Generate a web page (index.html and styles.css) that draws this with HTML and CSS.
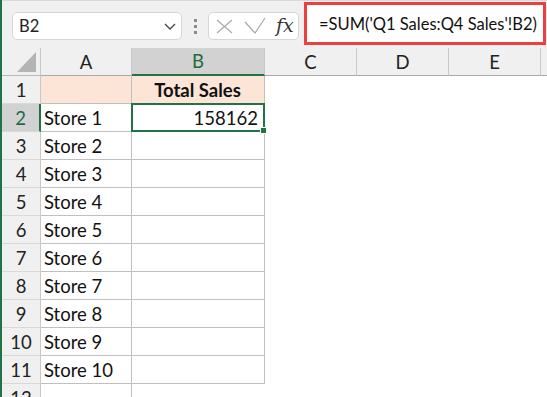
FILE: index.html
```html
<!DOCTYPE html>
<html lang="en">
<head>
    <meta charset="UTF-8">
    <title>Sheet - Total Sales</title>
    <link rel="stylesheet" href="styles.css">
</head>
<body>
    <div class="sheet">
        <div class="bar">
            <div class="namebox">
                <span>B2</span>
                <svg class="chevron" width="12" height="7" viewBox="0 0 12 7"><polyline points="1,1 6,6 11,1" fill="none" stroke="#444" stroke-width="1.3"/></svg>
            </div>
            <div class="grip"><i></i><i></i><i></i></div>
            <div class="fxbox">
                <svg class="icon-x" width="17" height="15" viewBox="0 0 17 15"><path d="M1 1 L16 14 M16 1 L1 14" stroke="#aaa" stroke-width="1.2" fill="none"/></svg>
                <svg class="icon-ok" width="22" height="17" viewBox="0 0 22 17"><polyline points="1,5 11,16 21,1" fill="none" stroke="#aaa" stroke-width="1.2"/></svg>
                <span class="fx">fx</span>
            </div>
            <div class="formula">=SUM('Q1 Sales:Q4 Sales'!B2)</div>
        </div>

        <div class="grid">
            <div class="corner"><span class="tri"></span></div>
            <div class="colhead">A</div>
            <div class="colhead sel">B</div>
            <div class="colhead">C</div>
            <div class="colhead">D</div>
            <div class="colhead">E</div>
            <div class="colhead rest"></div>

            <div class="rowhead">1</div>
            <div class="cell fill"></div>
            <div class="cell fill bold center">Total Sales</div>
            <div class="blank"></div>

            <div class="rowhead sel">2</div>
            <div class="cell">Store 1</div>
            <div class="cell active right">158162<span class="handle"></span></div>
            <div class="blank"></div>

            <div class="rowhead">3</div>
            <div class="cell">Store 2</div>
            <div class="cell"></div>
            <div class="blank"></div>

            <div class="rowhead">4</div>
            <div class="cell">Store 3</div>
            <div class="cell"></div>
            <div class="blank"></div>

            <div class="rowhead">5</div>
            <div class="cell">Store 4</div>
            <div class="cell"></div>
            <div class="blank"></div>

            <div class="rowhead">6</div>
            <div class="cell">Store 5</div>
            <div class="cell"></div>
            <div class="blank"></div>

            <div class="rowhead">7</div>
            <div class="cell">Store 6</div>
            <div class="cell"></div>
            <div class="blank"></div>

            <div class="rowhead">8</div>
            <div class="cell">Store 7</div>
            <div class="cell"></div>
            <div class="blank"></div>

            <div class="rowhead">9</div>
            <div class="cell">Store 8</div>
            <div class="cell"></div>
            <div class="blank"></div>

            <div class="rowhead">10</div>
            <div class="cell">Store 9</div>
            <div class="cell"></div>
            <div class="blank"></div>

            <div class="rowhead">11</div>
            <div class="cell">Store 10</div>
            <div class="cell"></div>
            <div class="blank"></div>

            <div class="rowhead">12</div>
            <div class="empty"></div>
            <div class="empty"></div>
            <div class="blank"></div>
        </div>
    </div>
</body>
</html>
```

FILE: styles.css
```css
* {
    box-sizing: border-box;
}
body {
    margin: 0;
    background: #fff;
    font-family: Lato, "Liberation Sans", sans-serif;
    color: #111;
}
.sheet {
    width: 547px;
    height: 397px;
    overflow: hidden;
    border-left: 2px solid #217346;
    background: #fff;
}
.bar {
    height: 48px;
    display: flex;
    align-items: flex-start;
    background: #f0f0f0;
    border-top: 1px solid #d9d9d9;
}
.namebox {
    margin: 11px 0 0 10px;
    width: 170px;
    height: 28px;
    background: #fff;
    border: 1px solid #d6d6d6;
    border-radius: 5px;
    display: flex;
    align-items: center;
    justify-content: space-between;
    padding: 0 5px 0 6px;
    font-size: 16.5px;
    color: #222;
}
.chevron {
    margin-top: 1px;
}
.grip {
    margin: 18px 0 0 12px;
    width: 3px;
    display: flex;
    flex-direction: column;
    gap: 3px;
}
.grip i {
    display: block;
    width: 3px;
    height: 3px;
    background: #8a8a8a;
}
.fxbox {
    margin: 11px 0 0 11px;
    width: 91px;
    height: 28px;
    background: #fff;
    border: 1px solid #d6d6d6;
    border-radius: 5px;
    display: flex;
    align-items: center;
    padding-left: 7px;
}
.icon-ok {
    margin-left: 11px;
    margin-top: -2px;
}
.fx {
    margin-left: 10px;
    font-family: "DejaVu Serif", serif;
    font-style: italic;
    font-size: 19px;
    color: #333;
    margin-top: -3px;
}
.formula {
    margin: 1px 0 0 5px;
    width: 242px;
    height: 43px;
    border: 3px solid #ec3f3f;
    background: #fff;
    display: flex;
    align-items: center;
    padding-left: 12px;
    font-size: 16.5px;
    color: #111;
    white-space: nowrap;
}
.grid {
    display: grid;
    grid-template-columns: 39px 91px 133px 92px 92px 92px 1fr;
    grid-auto-rows: 28px;
    font-size: 18.5px;
}
.corner {
    background: #f0f0f0;
    border-right: 1px solid #c8c8c8;
    border-bottom: 1px solid #b8b8b8;
    position: relative;
}
.tri {
    position: absolute;
    right: 4px;
    bottom: 3px;
    width: 0;
    height: 0;
    border-left: 19px solid transparent;
    border-bottom: 20px solid #b4b4b4;
}
.colhead {
    background: #f0f0f0;
    border-right: 1px solid #c8c8c8;
    border-bottom: 1px solid #a8a8a8;
    display: flex;
    align-items: center;
    justify-content: center;
    color: #222;
}
.colhead.sel {
    background: #d2d2d2;
    color: #1e6b41;
    border-bottom: 2px solid #217346;
}
.colhead.rest {
    border-right: none;
}
.rowhead {
    background: #f0f0f0;
    border-right: 1px solid #c8c8c8;
    border-bottom: 1px solid #d9d9d9;
    display: flex;
    align-items: center;
    justify-content: center;
    color: #222;
}
.rowhead.sel {
    background: #d2d2d2;
    color: #1e6b41;
    border-right: 2px solid #217346;
}
.cell {
    border-right: 1px solid #c0c0c0;
    border-bottom: 1px solid #c0c0c0;
    display: flex;
    align-items: center;
    padding: 0 4px 0 3px;
    white-space: nowrap;
}
.fill {
    background: #fce4d6;
}
.bold {
    font-weight: bold;
}
.center {
    justify-content: center;
}
.right {
    justify-content: flex-end;
}
.active {
    position: relative;
    margin: -1px 0 0 -1px;
    border: 2px solid #217346;
    padding-right: 5px;
}
.handle {
    position: absolute;
    right: -4px;
    bottom: -4px;
    width: 7px;
    height: 7px;
    background: #217346;
    border: 1px solid #fff;
}
.blank {
    grid-column: span 4;
}
.empty {
    border-right: 1px solid transparent;
}
.empty + .empty {
    border-left: 1px solid #c0c0c0;
    margin-left: -1px;
    border-right: none;
}
```
